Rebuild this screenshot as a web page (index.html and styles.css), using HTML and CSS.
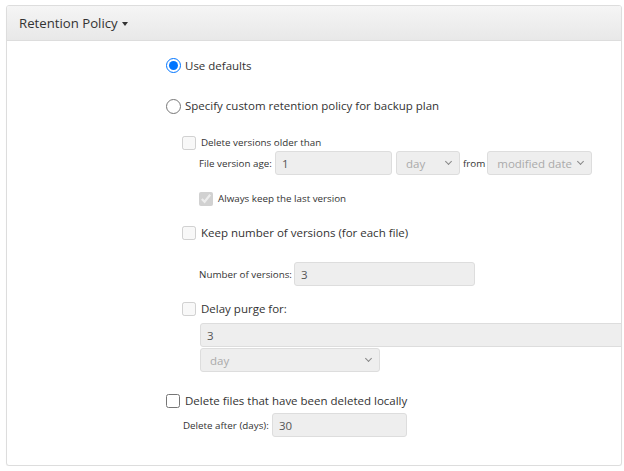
FILE: index.html
```html
<!DOCTYPE html>
<html>
<head>
<meta charset="utf-8">
<link rel="stylesheet" href="styles.css">
</head>
<body>
<div class="panel">
  <div class="panel-head">Retention Policy<span class="caret"></span></div>
  <div class="form">
    <label class="row r1"><input type="radio" name="rp" class="radio" checked><span class="lbl">Use defaults</span></label>
    <label class="row r2"><input type="radio" name="rp" class="radio"><span class="lbl">Specify custom retention policy for backup plan</span></label>
    <div class="group">
      <label class="row g1"><input type="checkbox" class="cb" disabled><span class="lbl small">Delete versions older than</span></label>
      <div class="field fva">
        <span class="flabel w-age">File version age:</span>
        <input class="inp w-age-in" type="text" value="1" disabled>
        <div class="sel w-day">day<span class="chev"></span></div>
        <span class="from">from</span>
        <div class="sel w-mod">modified date<span class="chev"></span></div>
      </div>
      <label class="row g2"><input type="checkbox" class="cb" checked disabled><span class="lbl small">Always keep the last version</span></label>
      <label class="row g3"><input type="checkbox" class="cb" disabled><span class="lbl">Keep number of versions (for each file)</span></label>
      <div class="field nov">
        <span class="flabel w-nov">Number of versions:</span>
        <input class="inp w-nov-in" type="text" value="3" disabled>
      </div>
      <label class="row g4"><input type="checkbox" class="cb" disabled><span class="lbl">Delay purge for:</span></label>
      <input class="inp delay-in" type="text" value="3" disabled>
      <div class="sel delay-sel">day<span class="chev"></span></div>
    </div>
    <label class="row r3"><input type="checkbox" class="cb"><span class="lbl">Delete files that have been deleted locally</span></label>
    <div class="field da">
      <span class="flabel w-da">Delete after (days):</span>
      <input class="inp w-da-in" type="text" value="30" disabled>
    </div>
  </div>
</div>
</body>
</html>
```

FILE: styles.css
```css
html, body {
  margin: 0;
  padding: 0;
  background: #fff;
}
body {
  font-family: "Open Sans", "Liberation Sans", sans-serif;
  color: #333;
  font-size: 11.5px;
}
.panel {
  margin: 5px 2px 0 6px;
  width: 614px;
  height: 459px;
  border: 1px solid #ddd;
  border-radius: 3px;
  box-shadow: 0 1px 1px rgba(0,0,0,0.05);
  overflow: hidden;
  background: #fff;
}
.panel-head {
  height: 34px;
  padding-left: 12px;
  font-size: 13.2px;
  color: #333;
  background: linear-gradient(#f5f5f5, #e8e8e8);
  border-bottom: 1px solid #ddd;
  display: flex;
  align-items: center;
}
.caret {
  display: inline-block;
  width: 0;
  height: 0;
  margin-left: 4px;
  margin-top: 2px;
  border-top: 4px solid #333;
  border-left: 3.5px solid transparent;
  border-right: 3.5px solid transparent;
}
.form {
  padding-left: 159px;
}
.row {
  display: flex;
  align-items: center;
  height: 16px;
  white-space: nowrap;
}
.radio {
  width: 15px;
  height: 15px;
  margin: 0 4px 0 0;
  accent-color: #0075ff;
}
.cb {
  width: 14px;
  height: 14px;
  margin: 0 5px 0 0;
}
.lbl {
  font-size: 11.5px;
  line-height: 16px;
}
.lbl.small {
  font-size: 9.8px;
}
.r1 { margin-top: 16px; height: 17px; }
.r2 { margin-top: 23px; height: 18px; }
.group { padding-left: 16px; }
.g1 { margin-top: 20px; }
.g2 { margin-top: 16px; padding-left: 17px; }
.g3 { margin-top: 18px; }
.g4 { margin-top: 15px; }
.r3 { margin-top: 21px; }
.field {
  display: flex;
  align-items: center;
  height: 24px;
  white-space: nowrap;
}
.fva { padding-left: 17px; }
.nov { padding-left: 17px; margin-top: 21px; }
.da { padding-left: 17px; margin-top: 4px; }
.flabel {
  font-size: 9.8px;
  color: #333;
}
.w-age { width: 76px; }
.w-nov { width: 95px; }
.w-da { width: 89px; }
.inp {
  box-sizing: border-box;
  height: 24px;
  border: 1px solid #ddd;
  border-radius: 3px;
  background: #eee;
  font-family: "Open Sans", "Liberation Sans", sans-serif;
  font-size: 11.5px;
  color: #555;
  padding: 0 6px;
  margin: 0;
}
.w-age-in { width: 117px; }
.w-nov-in { width: 181px; }
.w-da-in { width: 135px; }
.sel {
  box-sizing: border-box;
  height: 24px;
  border: 1px solid #ddd;
  border-radius: 3px;
  background: #eee;
  font-size: 11.5px;
  color: #aaa;
  padding: 0 6px 0 9px;
  display: flex;
  align-items: center;
  justify-content: space-between;
}
.chev {
  width: 4px;
  height: 4px;
  border-right: 1.5px solid #888;
  border-bottom: 1.5px solid #888;
  transform: rotate(45deg);
  margin: -3px 2px 0 0;
}
.w-day { width: 64px; margin-left: 4px; }
.from {
  font-size: 9.8px;
  margin: 0 2px 0 3px;
  color: #333;
}
.w-mod { width: 105px; }
.delay-in {
  display: block;
  width: 440px;
  margin: 6px 0 0 18px;
}
.delay-sel {
  width: 180px;
  margin: 1px 0 0 18px;
}
```
